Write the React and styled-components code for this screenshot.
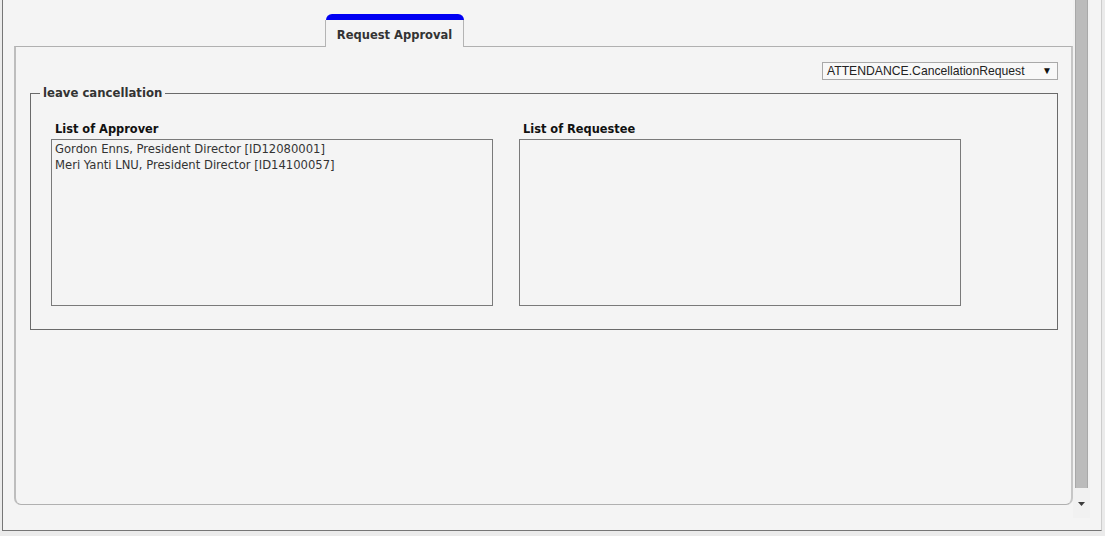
import React from "react";
import styled, { createGlobalStyle } from "styled-components";

const GlobalStyle = createGlobalStyle`
  html, body {
    margin: 0;
    padding: 0;
    background: #ebebeb;
  }
  body {
    font-family: "DejaVu Sans", "Liberation Sans", sans-serif;
    color: #222;
  }
`;

const Window = styled.div`
  margin-left: 2px;
  width: 1100px;
  height: 531px;
  box-sizing: border-box;
  display: flex;
  background: #f4f4f4;
  border-left: 1px solid #767676;
  border-bottom: 1px solid #767676;
  border-right: 1px solid #cdcdcd;
`;

const Content = styled.div`
  width: 1059px;
  margin-left: 11px;
  padding-top: 14px;
  display: flex;
  flex-direction: column;
`;

const TabStrip = styled.div`
  display: flex;
  height: 32px;
  padding-left: 311px;
`;

const Tab = styled.div`
  position: relative;
  z-index: 1;
  width: 139px;
  height: 33px;
  margin-bottom: -1px;
  display: flex;
  flex-direction: column;
`;

const TabCap = styled.div`
  height: 6px;
  margin-left: 1px;
  background: #0000f2;
  border-radius: 6px 6px 0 0;
`;

const TabLabel = styled.div`
  flex: 1;
  background: #f4f4f4;
  border-left: 1px solid #b4b4b4;
  border-right: 1px solid #b4b4b4;
  font-size: 11.5px;
  font-weight: bold;
  color: #333;
  text-align: center;
  line-height: 14px;
  padding-top: 8px;
`;

const Panel = styled.div`
  height: 459px;
  box-sizing: border-box;
  border: 1px solid #b0b0b0;
  border-left: 2px solid #bdbdbd;
  border-right: 2px solid #c6c6c6;
  border-radius: 0 0 7px 7px;
  padding: 15px 13px 0 14px;
`;

const ToolRow = styled.div`
  display: flex;
  justify-content: flex-end;
`;

const Select = styled.div`
  width: 236px;
  height: 18px;
  box-sizing: border-box;
  border: 1px solid #a9a9a9;
  background: #f8f8f8;
  display: flex;
  align-items: center;
  justify-content: space-between;
  padding: 0 5px 0 4px;
  font-family: "Liberation Sans", Arial, sans-serif;
  font-size: 12.2px;
  color: #222;
`;

const Caret = styled.span`
  font-size: 10px;
  line-height: 10px;
  color: #111;
`;

const Group = styled.fieldset`
  margin: 6px 0 0 0;
  padding: 22px 20px 23px 20px;
  border: 1px solid #6a6a6a;
  min-width: 0;
`;

const GroupTitle = styled.legend`
  margin-left: -11px;
  padding: 0 3px;
  font-size: 11.7px;
  font-weight: bold;
  line-height: 14px;
  color: #333;
`;

const Columns = styled.div`
  display: grid;
  grid-template-columns: 442px 442px;
  column-gap: 26px;
`;

const Column = styled.div`
  display: flex;
  flex-direction: column;
  gap: 3px;
`;

const ColumnTitle = styled.div`
  padding-left: 4px;
  font-size: 11.4px;
  font-weight: bold;
  line-height: 14px;
  color: #111;
`;

const ListBox = styled.div`
  height: 167px;
  box-sizing: border-box;
  border: 1px solid #7a7a7a;
  padding: 1px 3px 0;
  overflow: hidden;
`;

const ListItem = styled.div`
  font-size: 11.6px;
  line-height: 16px;
  color: #333;
  white-space: nowrap;
`;

const ScrollTrack = styled.div`
  width: 17px;
  height: 518px;
  box-sizing: border-box;
  padding: 0 2px;
  background: #f1f1f1;
  display: flex;
  flex-direction: column;
  align-items: flex-start;
`;

const ScrollThumb = styled.div`
  width: 13px;
  height: 488px;
  box-sizing: border-box;
  background: #bbbbbb;
  border-left: 1px solid #a8a8a8;
  border-right: 1px solid #a8a8a8;
`;

const ScrollArrow = styled.div`
  flex: 1;
  width: 13px;
  display: flex;
  align-items: center;
  justify-content: center;
  padding-top: 2px;
`;

const lists = [
  {
    title: "List of Approver",
    items: [
      "Gordon Enns, President Director [ID12080001]",
      "Meri Yanti LNU, President Director [ID14100057]",
    ],
  },
  { title: "List of Requestee", items: [] },
];

export default function App() {
  return (
    <>
      <GlobalStyle />
      <Window>
        <Content>
          <TabStrip>
            <Tab>
              <TabCap />
              <TabLabel>Request Approval</TabLabel>
            </Tab>
          </TabStrip>
          <Panel>
            <ToolRow>
              <Select>
                <span>ATTENDANCE.CancellationRequest</span>
                <Caret>▼</Caret>
              </Select>
            </ToolRow>
            <Group>
              <GroupTitle>leave cancellation</GroupTitle>
              <Columns>
                {lists.map((list) => (
                  <Column key={list.title}>
                    <ColumnTitle>{list.title}</ColumnTitle>
                    <ListBox>
                      {list.items.map((item) => (
                        <ListItem key={item}>{item}</ListItem>
                      ))}
                    </ListBox>
                  </Column>
                ))}
              </Columns>
            </Group>
          </Panel>
        </Content>
        <ScrollTrack>
          <ScrollThumb />
          <ScrollArrow>
            <svg width="7" height="4" viewBox="0 0 7 4">
              <path d="M0 0h7L3.5 4z" fill="#3c3c3c" />
            </svg>
          </ScrollArrow>
        </ScrollTrack>
      </Window>
    </>
  );
}
